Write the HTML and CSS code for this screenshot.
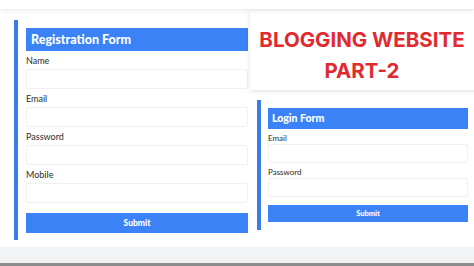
FILE: index.html
```html
<!DOCTYPE html>
<html>
<head>
<meta charset="utf-8">
<link rel="stylesheet" href="styles.css">
</head>
<body>
<div class="topbar"></div>
<div class="main">
  <div class="card reg">
    <div class="card-head">Registration Form</div>
    <div class="field"><label>Name</label><div class="input"></div></div>
    <div class="field"><label>Email</label><div class="input"></div></div>
    <div class="field"><label>Password</label><div class="input"></div></div>
    <div class="field"><label>Mobile</label><div class="input"></div></div>
    <div class="btn">Submit</div>
  </div>
  <div class="side">
    <div class="title">BLOGGING WEBSITE<br>PART-2</div>
    <div class="card login">
      <div class="card-head">Login Form</div>
      <div class="field"><label>Email</label><div class="input"></div></div>
      <div class="field"><label>Password</label><div class="input"></div></div>
      <div class="btn">Submit</div>
    </div>
  </div>
</div>
<div class="footer"></div>
<div class="footer-dark"></div>
</body>
</html>
```
FILE: styles.css
```css
* { box-sizing: border-box; margin: 0; padding: 0; }
html, body { width: 474px; height: 266px; overflow: hidden; background: #fff; }
body { font-family: "Lato", "Open Sans", sans-serif; color: #2b2b2b; }

.topbar { height: 9px; background: #fff; box-shadow: 0 2px 4px rgba(0,0,0,0.08); position: relative; z-index: 1; }

.main { display: flex; height: 238px; padding-left: 14px; }

.card { border-left: 4px solid #3b7de8; background: #fff; flex-shrink: 0; }

.reg { width: 234px; height: 220px; margin-top: 11px; padding: 8px 0 7px 8px; }
.reg .card-head { height: 23px; font-size: 12.5px; padding-left: 5px; line-height: 23px; }
.reg .field label { display: block; margin-top: 4px; margin-bottom: 2px; height: 12px; line-height: 12px; font-size: 9px; }
.reg .input { height: 20px; }
.reg .btn { margin-top: 10px; height: 20px; line-height: 20px; font-size: 8.5px; }

.card-head { background: #3b82f6; color: #fff; font-weight: 900; }

.input { border: 1px solid #f0f0f2; border-radius: 2px; background: #fff; }
.btn { background: #3b82f6; color: #fff; font-weight: 900; text-align: center; }

.side { width: 224px; margin-left: 2px; display: flex; flex-direction: column; flex-shrink: 0; }

.title { margin-top: 1px; height: 80px; width: 230px; background: #fff; box-shadow: 0 1px 5px rgba(0,0,0,0.12);
  font-family: "Inter", "Roboto", sans-serif; font-weight: 700; font-size: 20.5px; color: #e02a2f;
  text-align: center; line-height: 31px; padding-top: 14px; padding-right: 6px; }

.login { width: 211px; height: 130px; margin-top: 10px; margin-left: 7px; padding: 8px 0 7px 7px; }
.login .card-head { height: 21px; line-height: 21px; font-size: 10.5px; padding-left: 4px; }
.login .field label { display: block; margin-top: 4px; margin-bottom: 1px; height: 10px; line-height: 10px; font-size: 8px; }
.login .input { height: 19px; }
.login .btn { margin-top: 8px; height: 17px; line-height: 17px; font-size: 7.5px; }

.footer { height: 16px; background: #f2f3f5; }
.footer-dark { height: 3px; background: #8c8c8c; }
```
